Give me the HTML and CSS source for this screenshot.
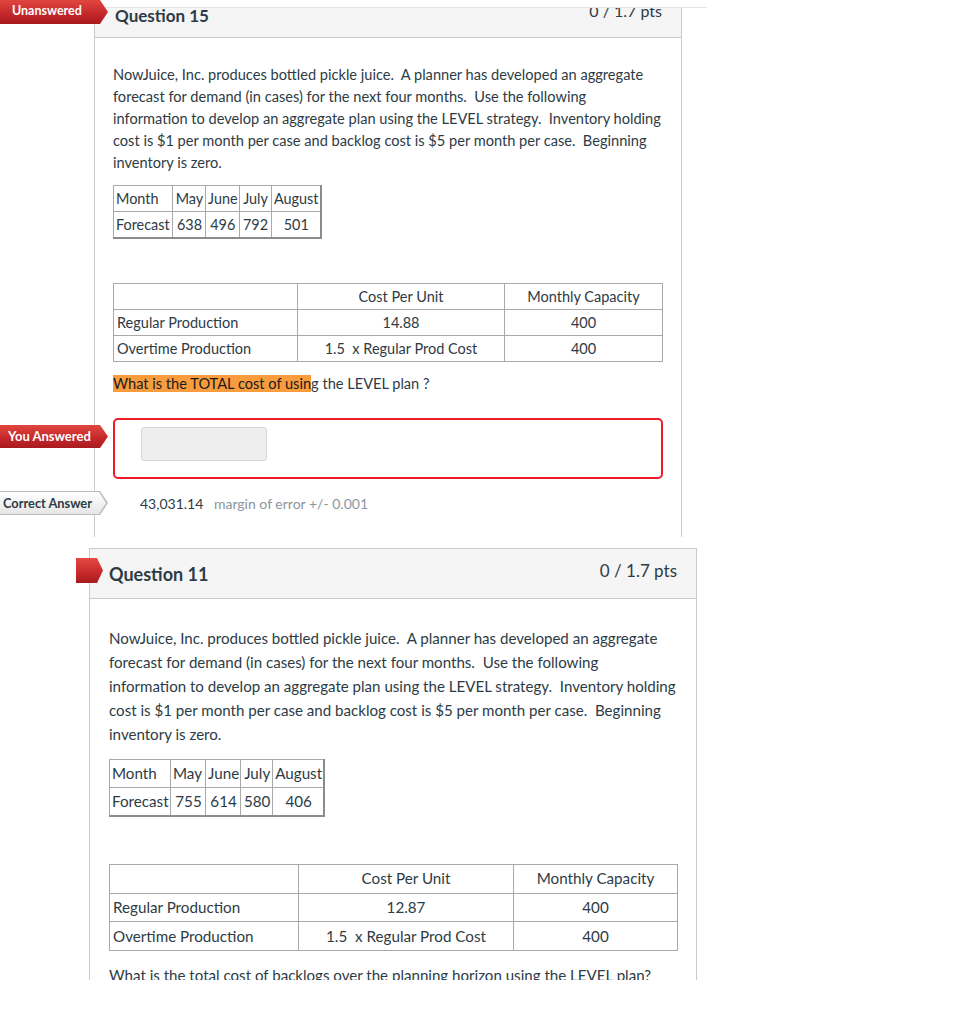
FILE: index.html
```html
<!DOCTYPE html>
<html lang="en">
<head>
  <meta charset="UTF-8">
  <title>Quiz Results</title>
  <link rel="stylesheet" href="styles.css">
</head>
<body>

  <!-- first capture: question 15 -->
  <div class="shot shot-top">
    <div class="rule"></div>
    <div class="quiz quiz-top">
      <div class="q-head">
        <span class="q-name">Question 15</span>
        <span class="pts">0 / 1.7 pts</span>
      </div>
      <div class="q-body">
        <p>NowJuice, Inc. produces bottled pickle juice. &nbsp;A planner has developed an aggregate forecast for demand (in cases) for the next four months. &nbsp;Use the following information to develop an aggregate plan using the LEVEL strategy. &nbsp;Inventory holding cost is $1 per month per case and backlog cost is $5 per month per case. &nbsp;Beginning inventory is zero.</p>
        <table class="forecast">
          <colgroup><col class="c-label"><col class="c-may"><col class="c-june"><col class="c-july"><col class="c-aug"></colgroup>
          <tr><td class="left">Month</td><td>May</td><td>June</td><td>July</td><td>August</td></tr>
          <tr><td class="left">Forecast</td><td>638</td><td>496</td><td>792</td><td>501</td></tr>
        </table>
        <table class="costs">
          <colgroup><col class="c-kind"><col class="c-cost"><col class="c-cap"></colgroup>
          <tr><td></td><td>Cost Per Unit</td><td>Monthly Capacity</td></tr>
          <tr><td class="left">Regular Production</td><td>14.88</td><td>400</td></tr>
          <tr><td class="left">Overtime Production</td><td>1.5 &nbsp;x Regular Prod Cost</td><td>400</td></tr>
        </table>
        <p class="ask"><span class="mark">What is the TOTAL cost of usin</span>g the LEVEL plan ?</p>

        <div class="answer-box">
          <div class="answer-input"></div>
        </div>
        <p class="correct">43,031.14 <span class="margin">margin of error +/- 0.001</span></p>
      </div>
    </div>

    <div class="ribbon ribbon-red ribbon-unanswered">Unanswered</div>
    <div class="ribbon ribbon-red ribbon-you">You Answered</div>
    <div class="ribbon-gray"><span>Correct Answer</span></div>
  </div>

  <!-- second capture: question 11 -->
  <div class="shot shot-bottom">
    <div class="quiz quiz-bottom">
      <div class="q-head">
        <span class="q-name">Question 11</span>
        <span class="pts">0 / 1.7 pts</span>
      </div>
      <div class="q-body">
        <p>NowJuice, Inc. produces bottled pickle juice. &nbsp;A planner has developed an aggregate forecast for demand (in cases) for the next four months. &nbsp;Use the following information to develop an aggregate plan using the LEVEL strategy. &nbsp;Inventory holding cost is $1 per month per case and backlog cost is $5 per month per case. &nbsp;Beginning inventory is zero.</p>
        <table class="forecast">
          <colgroup><col class="c-label"><col class="c-may"><col class="c-june"><col class="c-july"><col class="c-aug"></colgroup>
          <tr><td class="left">Month</td><td class="left">May</td><td>June</td><td>July</td><td>August</td></tr>
          <tr><td class="left">Forecast</td><td>755</td><td>614</td><td>580</td><td>406</td></tr>
        </table>
        <table class="costs">
          <colgroup><col class="c-kind"><col class="c-cost"><col class="c-cap"></colgroup>
          <tr><td></td><td>Cost Per Unit</td><td>Monthly Capacity</td></tr>
          <tr><td class="left">Regular Production</td><td>12.87</td><td>400</td></tr>
          <tr><td class="left">Overtime Production</td><td>1.5 &nbsp;x Regular Prod Cost</td><td>400</td></tr>
        </table>
        <p class="ask">What is the total cost of backlogs over the planning horizon using the LEVEL plan?</p>
      </div>
    </div>

    <div class="flag"></div>
  </div>

</body>
</html>
```

FILE: styles.css
```css
body {
  margin: 0;
  font-family: Lato, "Open Sans", Arial, sans-serif;
  color: #2d3b45;
  background-color: #ffffff;
}
p { margin: 0; }

.shot { position: relative; overflow: hidden; }
.shot-top { height: 537px; }
.shot-bottom { height: 432px; margin-top: 11px; }

.rule {
  height: 7px; width: 613px; margin-left: 94px;
  border-bottom: 1px solid #e4e4e4;
}

.quiz {
  box-sizing: border-box;
  border-left: 1px solid #c7cdd1;
  border-right: 1px solid #c7cdd1;
}
.quiz-top { margin-left: 94px; width: 588px; height: 529px; }
.quiz-bottom { margin-left: 89px; width: 608px; height: 432px; border-top: 1px solid #c7cdd1; }

.q-head {
  display: flex; justify-content: space-between; align-items: flex-start;
  background-color: #f5f5f5; border-bottom: 1px solid #c7cdd1;
  overflow: hidden;
}
.q-name { font-weight: 700; }

.quiz-top .q-head { height: 29px; padding: 0 19px 0 20px; }
.quiz-top .q-name { font-size: 17px; line-height: 18px; margin-top: -1px; }
.quiz-top .pts { font-size: 16px; line-height: 16px; margin-top: -5px; }

.quiz-bottom .q-head { height: 49px; padding: 0 19px; align-items: center; }
.quiz-bottom .q-name { font-size: 18px; line-height: 24px; }
.quiz-bottom .pts { font-size: 17px; line-height: 20px; align-self: flex-start; margin-top: 12px; }

/* question body */
.quiz-top .q-body { padding: 26px 18px 0; font-size: 14.6px; line-height: 22px; }
.quiz-bottom .q-body { padding: 27px 19px 0; font-size: 15.1px; line-height: 24px; }

table { border-collapse: collapse; table-layout: fixed; color: #2d3b45; }
td { border: 1px solid #a9a9a9; padding: 0 2px; text-align: center; white-space: nowrap; overflow: hidden; }
td.left { text-align: left; }

.forecast { border: 1px solid #8c8c8c; border-right-width: 2px; border-bottom-width: 2px; }
.quiz-top .forecast { margin-top: 11px; font-size: 14.4px; }
.quiz-top .forecast td { height: 25px; line-height: 25px; padding: 0 1px 0 2px; }
.quiz-top .forecast .c-label { width: 59px; }
.quiz-top .forecast .c-may { width: 33px; }
.quiz-top .forecast .c-june { width: 32px; }
.quiz-top .forecast .c-july { width: 32px; }
.quiz-top .forecast .c-aug { width: 50px; }

.quiz-bottom .forecast { margin-top: 13px; font-size: 15.2px; }
.quiz-bottom .forecast td { height: 27px; line-height: 27px; padding: 0 1px 0 2px; }
.quiz-bottom .forecast .c-label { width: 61px; }
.quiz-bottom .forecast .c-may { width: 35px; }
.quiz-bottom .forecast .c-june { width: 34px; }
.quiz-bottom .forecast .c-july { width: 32px; }
.quiz-bottom .forecast .c-aug { width: 51px; }

.costs { border: 1px solid #9a9a9a; }
.costs td { padding: 0 3px; }
.quiz-top .costs { margin-top: 44px; width: 549px; font-size: 14.5px; }
.quiz-top .costs td { height: 25px; line-height: 25px; }
.quiz-top .costs .c-kind { width: 184px; }
.quiz-top .costs .c-cost { width: 207px; }
.quiz-top .costs .c-cap { width: 158px; }

.quiz-bottom .costs { margin-top: 47px; width: 568px; font-size: 15.2px; }
.quiz-bottom .costs td { height: 27.7px; line-height: 27px; }
.quiz-bottom .costs .c-kind { width: 189px; }
.quiz-bottom .costs .c-cost { width: 215px; }
.quiz-bottom .costs .c-cap { width: 164px; }

.quiz-top .ask { margin-top: 11px; }
.quiz-bottom .ask { margin-top: 12px; }
.mark { background-color: #f89c3e; color: #1b1b1b; }

.answer-box {
  margin-top: 23px; height: 61px; box-sizing: border-box;
  border: 2px solid #ee1c25; border-radius: 5px;
  padding: 7px 26px;
}
.answer-input {
  width: 126px; height: 34px; box-sizing: border-box;
  background-color: #eeeeee; border: 1px solid #d6d6d6; border-radius: 3px;
}
.correct { margin-top: 14px; padding-left: 27px; font-size: 14px; }
.correct .margin { color: #8b969e; margin-left: 7px; }

/* side labels */
.ribbon {
  position: absolute; left: 0;
  width: 108px; height: 23px; box-sizing: border-box;
  font-size: 13px; font-weight: 700; line-height: 23px;
  clip-path: polygon(0 0, 100px 0, 108px 50%, 100px 100%, 0 100%);
}
.ribbon-red {
  color: #ffffff;
  background: linear-gradient(#e0463f, #c3262a 60%, #a81a1e);
}
.ribbon-unanswered { top: 0; height: 24px; padding-left: 12px; font-size: 12.5px; line-height: 22px; }
.ribbon-you { top: 425px; padding-left: 8px; }

.ribbon-gray {
  position: absolute; left: 0; top: 491px;
  width: 108px; height: 24px; padding: 1px 1px 1px 0; box-sizing: border-box;
  background-color: #bcbcbc;
  clip-path: polygon(0 0, 100px 0, 108px 50%, 100px 100%, 0 100%);
}
.ribbon-gray span {
  display: block; height: 22px; padding-left: 3px;
  font-size: 12.8px; font-weight: 700; line-height: 22px; color: #2d3b45;
  background: linear-gradient(#ffffff, #e6e6e6);
  clip-path: polygon(0 0, 99px 0, 106px 50%, 99px 100%, 0 100%);
}

.flag {
  position: absolute; left: 76px; top: 10px;
  width: 27px; height: 25px;
  background: linear-gradient(#e44a42, #c4262a 65%, #a51b1d);
  clip-path: polygon(0 0, 21px 0, 27px 50%, 21px 100%, 0 100%);
}
```
